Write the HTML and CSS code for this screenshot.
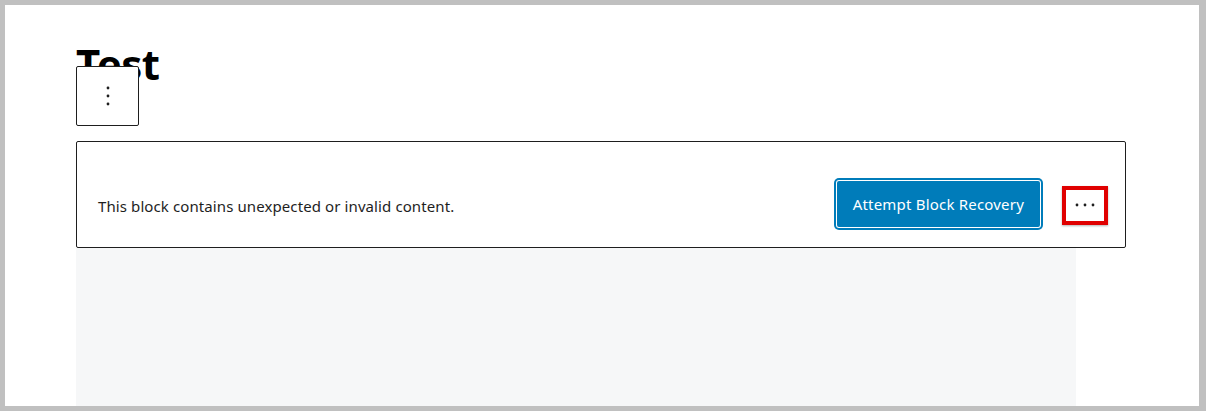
FILE: index.html
```html
<!DOCTYPE html>
<html lang="en">
<head>
  <meta charset="UTF-8">
  <meta name="viewport" content="width=device-width, initial-scale=1.0">
  <link rel="stylesheet" href="styles.css">
  <title>Invalid block</title>
</head>
<body>

<div class="frame">
  <div class="editor">
    <div class="title-wrap">
      <h1 class="post-title">Test</h1>
      <div class="block-toolbar">
        <svg width="24" height="24" viewBox="0 0 24 24">
          <circle cx="12" cy="4" r="1.4" fill="#1e1e1e"/>
          <circle cx="12" cy="12" r="1.4" fill="#1e1e1e"/>
          <circle cx="12" cy="20" r="1.4" fill="#1e1e1e"/>
        </svg>
      </div>
    </div>

    <div class="invalid-block">
      <p class="warning-text">This block contains unexpected or invalid content.</p>
      <div class="warning-actions">
        <button class="recover-btn">Attempt Block Recovery</button>
        <div class="more-btn">
          <svg width="24" height="24" viewBox="0 0 24 24">
            <circle cx="4" cy="12" r="1.4" fill="#1e1e1e"/>
            <circle cx="12" cy="12" r="1.4" fill="#1e1e1e"/>
            <circle cx="20" cy="12" r="1.4" fill="#1e1e1e"/>
          </svg>
        </div>
      </div>
    </div>

    <div class="preview"></div>
  </div>
</div>

</body>
</html>
```

FILE: styles.css
```css
body {
  margin: 0;
  padding: 5px 7px 5px 5px;
  background-color: #c0c0c0;
  font-family: "Noto Sans", "Open Sans", sans-serif;
}

.frame {
  background-color: #fff;
  height: 401px;
  overflow: hidden;
}

.editor {
  padding: 0 73px 0 71px;
}

.title-wrap {
  position: relative;
  height: 136px;
}

.post-title {
  margin: 0;
  padding-top: 34px;
  font-family: "Noto Sans", sans-serif;
  font-size: 42px;
  font-weight: 700;
  line-height: 1.2;
  color: #000;
  letter-spacing: -0.6px;
}

.block-toolbar {
  position: absolute;
  left: 0;
  top: 61px;
  width: 63px;
  height: 60px;
  border: 1px solid #1e1e1e;
  border-radius: 2px;
  background-color: #fff;
  display: flex;
  justify-content: center;
  align-items: center;
  box-sizing: border-box;
}

.invalid-block {
  display: flex;
  justify-content: space-between;
  align-items: center;
  height: 107px;
  box-sizing: border-box;
  padding: 19px 17px 0 21px;
  border: 1px solid #1e1e1e;
  border-radius: 2px;
}

.warning-text {
  margin: 0;
  padding-top: 3px;
  font-size: 15px;
  letter-spacing: 0.1px;
  color: #1e1e1e;
}

.warning-actions {
  display: flex;
  align-items: center;
  gap: 19px;
}

.recover-btn {
  height: 48px;
  padding: 0 17px;
  margin: 2px;
  background-color: #007cba;
  color: #fff;
  font-family: "Noto Sans", sans-serif;
  font-size: 15px;
  letter-spacing: 0.2px;
  border: none;
  border-radius: 3px;
  box-shadow: inset 0 0 0 1px #fff, 0 0 0 2px #007cba;
  cursor: pointer;
}

.more-btn {
  width: 46px;
  height: 39px;
  margin-top: 2px;
  box-sizing: border-box;
  border: 4px solid #e00000;
  display: flex;
  justify-content: center;
  align-items: center;
  box-shadow: 0 1px 2px rgba(0, 0, 0, 0.3);
}

.preview {
  width: 1000px;
  height: 170px;
  background-color: #f6f7f8;
}
```
